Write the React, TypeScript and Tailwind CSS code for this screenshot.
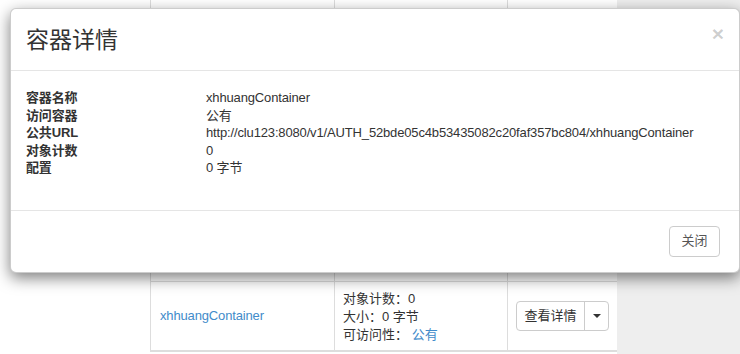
import type { FC } from 'react';

const rows: Array<{ label: string; value: string }> = [
  { label: '容器名称', value: 'xhhuangContainer' },
  { label: '访问容器', value: '公有' },
  { label: '公共URL', value: 'http://clu123:8080/v1/AUTH_52bde05c4b53435082c20faf357bc804/xhhuangContainer' },
  { label: '对象计数', value: '0' },
  { label: '配置', value: '0 字节' },
];

const BackgroundTable: FC = () => (
  <div className="flex h-[354px] w-[740px]">
    <div className="w-[617px] bg-white">
      <div className="ml-[150px] grid w-[467px] grid-cols-[184px_173px_110px] border-l border-[#ddd]">
        {/* rows hidden under the dialog */}
        <div className="h-[281px] border-r border-[#ddd]" />
        <div className="h-[281px] border-r border-[#ddd]" />
        <div className="h-[281px]" />

        <div className="flex h-[71px] items-center border-t border-r border-b-2 border-[#ddd] pl-[9px]">
          <a className="text-[13px] tracking-[-0.15px] text-[#428bca]">xhhuangContainer</a>
        </div>
        <div className="flex h-[71px] flex-col justify-center border-t border-r border-b-2 border-[#ddd] pl-[8px] pt-[2px] text-[13px] leading-[18px] text-[#333]">
          <span>对象计数：0</span>
          <span>大小：0 字节</span>
          <span>
            可访问性： <a className="text-[#428bca]">公有</a>
          </span>
        </div>
        <div className="flex h-[71px] items-center border-t border-b-2 border-[#ddd] pl-[8px]">
          <div className="flex h-[30px] rounded-[4px] border border-[#ccc] bg-white text-[13px] text-[#333]">
            <button className="w-[68px] border-r border-[#ccc] text-center">查看详情</button>
            <button className="flex w-[23px] items-center justify-center">
              <span className="h-0 w-0 border-x-[4px] border-t-[4px] border-x-transparent border-t-[#333]" />
            </button>
          </div>
        </div>
      </div>
    </div>
    <div className="flex-1 bg-[#eee]" />
  </div>
);

const DetailDialog: FC = () => (
  <div className="absolute left-[10px] top-[8px] w-[730px] rounded-[6px] border border-black/20 bg-white shadow-[0_5px_15px_rgba(0,0,0,0.5)]">
    <div className="flex h-[62px] items-start justify-between border-b border-[#e5e5e5] pl-[15px] pr-[15px]">
      <h4 className="mt-[17px] text-[23px] font-normal leading-[28px] text-[#333]">容器详情</h4>
      <button className="mt-[14px] text-[21px] font-bold leading-none text-black/20">×</button>
    </div>
    <div className="border-b border-[#e5e5e5] pl-[15px] pr-[15px] pt-[18px] pb-[33px]">
      <dl className="grid grid-cols-[180px_1fr] text-[13px] leading-[17.5px] tracking-[-0.15px] text-[#333]">
        {rows.map((r) => (
          <div key={r.label} className="contents">
            <dt className="font-bold">{r.label}</dt>
            <dd>{r.value}</dd>
          </div>
        ))}
      </dl>
    </div>
    <div className="flex h-[61px] items-start justify-end pr-[19px] pt-[15px]">
      <button className="h-[31px] w-[51px] rounded-[4px] border border-[#ccc] bg-white text-[13px] text-[#555]">
        关闭
      </button>
    </div>
  </div>
);

const App: FC = () => (
  <div className="relative h-[354px] w-[740px] overflow-hidden font-['Liberation_Sans','Noto_Sans_CJK_SC',sans-serif]">
    <BackgroundTable />
    <DetailDialog />
  </div>
);

export default App;
